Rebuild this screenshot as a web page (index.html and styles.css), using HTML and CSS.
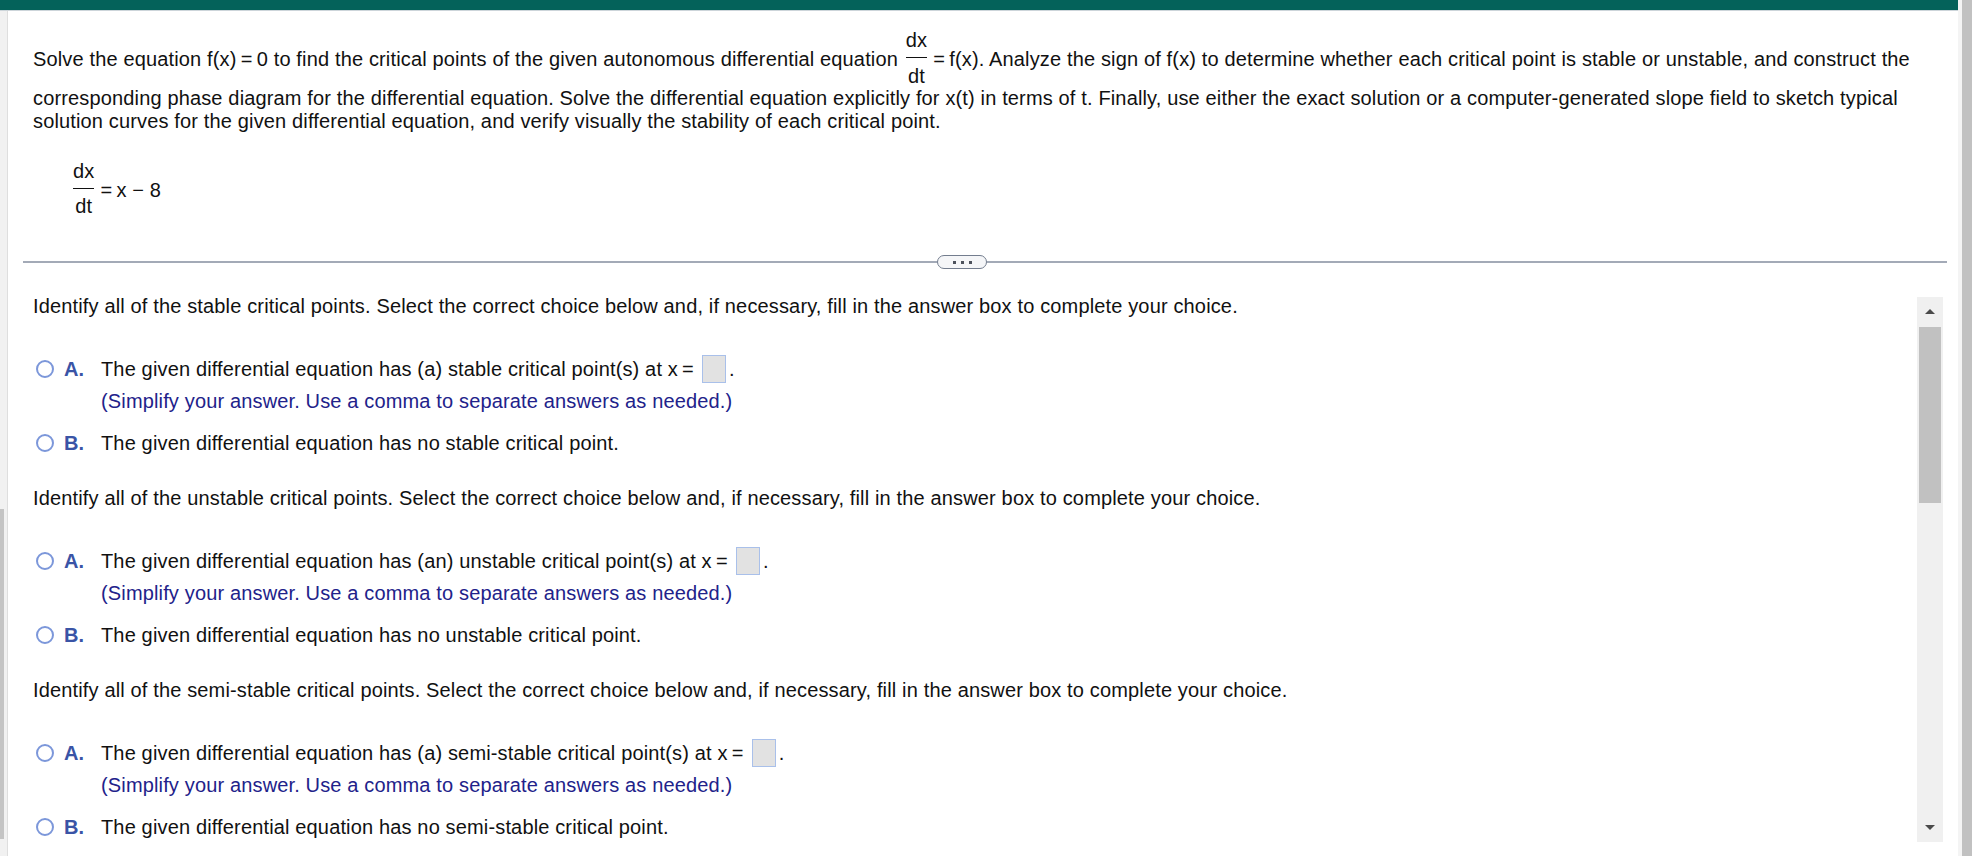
FILE: index.html
```html
<!DOCTYPE html>
<html lang="en">
  <head>
    <meta charset="UTF-8" />
    <title>Autonomous Differential Equation</title>
    <link rel="stylesheet" href="styles.css">
  </head>
  <body>
    <div class="page">
      <div class="frame">
        <div class="topbar"></div>
        <div class="bodyrow">
          <div class="rail"><div class="railthumb"></div></div>
          <div class="main">
            <p class="question">
              Solve the equation f(x)&thinsp;=&thinsp;0 to find the critical points of the given autonomous differential equation
              <span class="frac inline"><span class="num">dx</span><span class="den">dt</span></span>&thinsp;=&thinsp;f(x). Analyze the sign of f(x) to determine whether each critical point is stable or unstable, and construct the
              corresponding phase diagram for the differential equation. Solve the differential equation explicitly for x(t) in terms of t. Finally, use either the exact solution or a computer-generated slope field to sketch typical
              solution curves for the given differential equation, and verify visually the stability of each critical point.
            </p>

            <div class="equation">
              <span class="frac"><span class="num">dx</span><span class="den">dt</span></span>
              <span class="rhs">=&thinsp;x &minus; 8</span>
            </div>

            <div class="divider">
              <div class="rule-left"></div>
              <div class="more">
                <span class="dot"></span><span class="dot"></span><span class="dot"></span>
              </div>
              <div class="rule-right"></div>
            </div>

            <div class="answers">
              <div class="answerlist">
                <div class="part">
                  <div class="prompt">Identify all of the stable critical points. Select the correct choice below and, if necessary, fill in the answer box to complete your choice.</div>
                  <div class="choice choice-a">
                    <span class="radio"></span><span class="letter">A.</span>
                    <span class="ctext">The given differential equation has (a) stable critical point(s) at x&thinsp;=&thinsp;<span class="box"></span>.</span>
                  </div>
                  <div class="hint">(Simplify your answer. Use a comma to separate answers as needed.)</div>
                  <div class="choice choice-b">
                    <span class="radio"></span><span class="letter">B.</span>
                    <span class="ctext">The given differential equation has no stable critical point.</span>
                  </div>
                </div>

                <div class="part">
                  <div class="prompt">Identify all of the unstable critical points. Select the correct choice below and, if necessary, fill in the answer box to complete your choice.</div>
                  <div class="choice choice-a">
                    <span class="radio"></span><span class="letter">A.</span>
                    <span class="ctext">The given differential equation has (an) unstable critical point(s) at x&thinsp;=&thinsp;<span class="box"></span>.</span>
                  </div>
                  <div class="hint">(Simplify your answer. Use a comma to separate answers as needed.)</div>
                  <div class="choice choice-b">
                    <span class="radio"></span><span class="letter">B.</span>
                    <span class="ctext">The given differential equation has no unstable critical point.</span>
                  </div>
                </div>

                <div class="part">
                  <div class="prompt">Identify all of the semi-stable critical points. Select the correct choice below and, if necessary, fill in the answer box to complete your choice.</div>
                  <div class="choice choice-a">
                    <span class="radio"></span><span class="letter">A.</span>
                    <span class="ctext">The given differential equation has (a) semi-stable critical point(s) at x&thinsp;=&thinsp;<span class="box"></span>.</span>
                  </div>
                  <div class="hint">(Simplify your answer. Use a comma to separate answers as needed.)</div>
                  <div class="choice choice-b">
                    <span class="radio"></span><span class="letter">B.</span>
                    <span class="ctext">The given differential equation has no semi-stable critical point.</span>
                  </div>
                </div>
              </div>

              <div class="vscroll">
                <div class="arrow-up"></div>
                <div class="vthumb"></div>
                <div class="vspace"></div>
                <div class="arrow-down"></div>
              </div>
            </div>
          </div>
        </div>
      </div>
      <div class="pagescroll"></div>
    </div>
  </body>
</html>
```

FILE: styles.css
```css
body {
  margin: 0;
  background-color: white;
  font-family: "Liberation Sans", Arial, sans-serif;
  font-size: 20px;
  letter-spacing: 0.15px;
  color: #111;
}
.page {
  display: flex;
  height: 856px;
  overflow: hidden;
}
.frame {
  flex: 1;
  display: flex;
  flex-direction: column;
}
.topbar {
  height: 10px;
  background-color: #04625a;
  border-bottom: 1px solid #cdd5da;
}
.bodyrow {
  flex: 1;
  display: flex;
}
.rail {
  width: 7px;
  background-color: #f1f1f1;
  border-right: 1px solid #dedede;
}
.railthumb {
  width: 4px;
  height: 330px;
  margin-top: 498px;
  background-color: #c4c4c4;
}
.main {
  flex: 1;
  display: flex;
  flex-direction: column;
}
.question {
  margin: 0;
  padding: 18px 18px 0 25px;
  line-height: 23px;
}
.frac {
  display: inline-flex;
  flex-direction: column;
  align-items: center;
}
.frac.inline {
  vertical-align: 19px;
}
.num {
  line-height: 22px;
  padding: 0 2px 6px 2px;
}
.den {
  line-height: 22px;
  padding: 6px 2px 0 2px;
  border-top: 1px solid #111;
}
.frac.inline .den {
  padding-top: 7px;
}
.equation {
  display: flex;
  align-items: center;
  margin: 27px 0 0 63px;
}
.rhs {
  margin-left: 4px;
  padding-top: 2px;
  line-height: 22px;
}
.divider {
  display: flex;
  align-items: center;
  height: 14px;
  margin: 38px 11px 0 15px;
}
.rule-left {
  width: 914px;
  height: 2px;
  background-color: #a3aab7;
}
.rule-right {
  flex: 1;
  height: 2px;
  background-color: #a3aab7;
}
.more {
  box-sizing: border-box;
  width: 50px;
  height: 14px;
  border: 1.5px solid #737d8e;
  border-radius: 8px;
  background-color: #f5f6f8;
  display: flex;
  justify-content: center;
  align-items: center;
  gap: 5px;
}
.dot {
  width: 3px;
  height: 3px;
  background-color: #4d525c;
}
.answers {
  display: flex;
  height: 548px;
  margin-top: 25px;
  overflow: hidden;
}
.answerlist {
  flex: 1;
  padding-left: 25px;
}
.part {
  margin-bottom: 31px;
}
.prompt {
  line-height: 24px;
}
.choice {
  display: flex;
  align-items: center;
}
.choice-a {
  height: 30px;
  margin-top: 36px;
}
.choice-b {
  height: 24px;
  margin-top: 18px;
}
.radio {
  box-sizing: border-box;
  width: 18px;
  height: 18px;
  margin-left: 3px;
  border: 2px solid #7c97da;
  border-radius: 50%;
  background-color: white;
}
.letter {
  width: 37px;
  margin-left: 10px;
  font-weight: bold;
  color: #3a54a6;
}
.ctext {
  display: flex;
  align-items: center;
}
.box {
  box-sizing: border-box;
  width: 24px;
  height: 28px;
  margin-left: 4px;
  margin-right: 3px;
  border: 1px solid #a9c0ea;
  background-color: #e2e2e2;
}
.hint {
  line-height: 24px;
  margin-top: 5px;
  padding-left: 68px;
  color: #22228a;
}
.vscroll {
  width: 26px;
  margin-top: 3px;
  margin-right: 15px;
  background-color: #f0f0f0;
  display: flex;
  flex-direction: column;
  align-items: center;
}
.arrow-up {
  width: 0;
  height: 0;
  margin-top: 12px;
  border-left: 5px solid transparent;
  border-right: 5px solid transparent;
  border-bottom: 5px solid #4a4a4a;
}
.vthumb {
  width: 22px;
  height: 176px;
  margin-top: 13px;
  background-color: #c1c1c1;
}
.vspace {
  flex: 1;
}
.arrow-down {
  width: 0;
  height: 0;
  margin-bottom: 12px;
  border-left: 5px solid transparent;
  border-right: 5px solid transparent;
  border-top: 5px solid #4a4a4a;
}
.pagescroll {
  width: 10px;
  border-left: 4px solid #f4f4f4;
  background-color: #c1c1c1;
}
```
